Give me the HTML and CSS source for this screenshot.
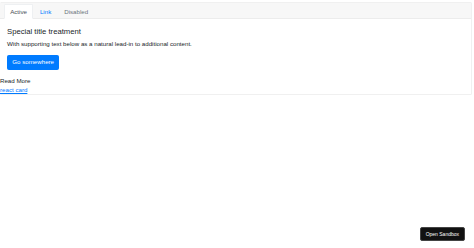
FILE: index.html
```html
<!DOCTYPE html>
<html lang="en">
<head>
  <meta charset="UTF-8">
  <title>react card</title>
  <link rel="stylesheet" href="styles.css">
</head>
<body>
  <div class="card">
    <div class="card-header">
      <ul class="nav-tabs">
        <li><a class="nav-link active" href="#">Active</a></li>
        <li><a class="nav-link" href="#">Link</a></li>
        <li><a class="nav-link disabled" href="#">Disabled</a></li>
      </ul>
    </div>
    <div class="card-body">
      <h5 class="card-title">Special title treatment</h5>
      <p class="card-text">With supporting text below as a natural lead-in to additional content.</p>
      <a href="#" class="btn">Go somewhere</a>
    </div>
    <div class="read-more">Read More</div>
    <a class="card-link" href="#">react card</a>
  </div>

  <a class="sandbox-btn" href="#">Open Sandbox</a>
</body>
</html>
```

FILE: styles.css
```css
body {
  margin: 0;
  font-family: "Liberation Sans", Arial, sans-serif;
  font-size: 6.16px;
  line-height: 9.24px;
  color: #212529;
  background-color: #fff;
}

.card {
  display: flex;
  flex-direction: column;
  margin: 2px 2px 0 0;
  border: 1px solid #f0f0f0;
  border-left: 0;
  border-radius: 1.5px;
}

.card-header {
  padding: 1px 6.5px 0;
  background-color: #f7f7f7;
  border-bottom: 1px solid #ececec;
}

.nav-tabs {
  display: flex;
  list-style: none;
  margin: 0 -3.85px -1px -2.85px;
  padding: 0;
}

.nav-link {
  display: block;
  padding: 2.1px 5.5px;
  border: 1px solid transparent;
  border-radius: 1.5px 1.5px 0 0;
  color: #007bff;
  text-decoration: none;
}

.nav-link.active {
  color: #495057;
  background-color: #fff;
  border-color: #eef0f2 #eef0f2 #fff;
}

.nav-link.disabled {
  color: #6c757d;
}

.card-body {
  padding: 7.4px 7.7px 6.2px 7px;
}

.card-title {
  margin: 0 0 3.08px;
  font-size: 7.7px;
  font-weight: normal;
  line-height: 9.24px;
}

.card-text {
  margin: 0 0 6.16px;
}

.btn {
  display: inline-block;
  padding: 1.9px 4.3px;
  border: 1px solid #007bff;
  border-radius: 1.5px;
  background-color: #007bff;
  color: #fff;
  text-decoration: none;
}

.read-more {
  color: #212529;
}

.card-link {
  align-self: flex-start;
  color: #007bff;
  text-decoration: underline;
}

.sandbox-btn {
  position: fixed;
  right: 9px;
  bottom: 7px;
  padding: 3.5px 5px;
  border: 1px solid #444;
  border-radius: 2px;
  background-color: #111;
  color: #fff;
  font-size: 5px;
  line-height: 5px;
  text-decoration: none;
}
```
